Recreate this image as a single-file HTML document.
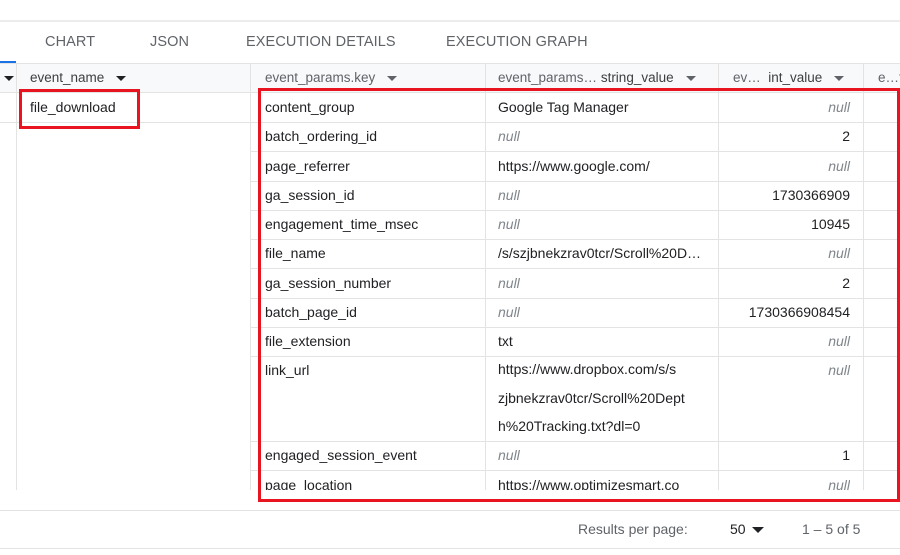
<!DOCTYPE html><html><head><style>
*{margin:0;padding:0;box-sizing:border-box}
body{width:900px;height:555px;background:#fff;font-family:"Liberation Sans",Arial,sans-serif;position:relative;overflow:hidden;font-size:14px;color:#202124}
.a{position:absolute;white-space:nowrap}
.h{background:#e3e3e3}
.v{background:#e3e3e3;width:1px}
.tab{top:34px;font-size:14.5px;color:#5f6368;letter-spacing:.1px}
.hd{top:70px;font-size:13.5px;color:#5f6368}
.hd b{color:#3c4043;font-weight:normal}
.t{display:inline-block;width:0;height:0;border-left:5px solid transparent;border-right:5px solid transparent;border-top:5px solid #5f6368;vertical-align:middle;margin-left:8px}
.null{color:#80868b;font-style:italic}
.red{position:absolute;border:3px solid #e8141f}
</style></head><body>
<div class="a h" style="left:0;top:20px;width:900px;height:2px;background:#ececec"></div>
<div class="a tab" style="left:45px">CHART</div>
<div class="a tab" style="left:150px">JSON</div>
<div class="a tab" style="left:246px">EXECUTION DETAILS</div>
<div class="a tab" style="left:446px">EXECUTION GRAPH</div>
<div class="a" style="left:0;top:61px;width:16px;height:2px;background:#1a73e8"></div>
<div class="a h" style="left:0;top:63px;width:900px;height:1px"></div>
<div class="a" style="left:0;top:64px;width:900px;height:28px;background:#f8f9fa"></div>
<div class="a h" style="left:0;top:92px;width:900px;height:1px"></div>
<div class="a hd" style="left:-4px"><span class="t" style="border-top-color:#202124"></span></div>
<div class="a hd" style="left:30px;color:#3c4043">event_name<span class="t" style="border-top-color:#202124;margin-left:12px"></span></div>
<div class="a hd" style="left:265px">event_params.key<span class="t" style="margin-left:12px"></span></div>
<div class="a hd" style="left:498px">event_params… <b>string_value</b><span class="t" style="margin-left:12px"></span></div>
<div class="a hd" style="left:733px">ev… &nbsp;<b>int_value</b><span class="t" style="margin-left:12px"></span></div>
<div class="a hd" style="left:878px">e…f</div>
<div class="a v" style="left:16px;top:64px;height:426px"></div>
<div class="a v" style="left:250px;top:64px;height:426px"></div>
<div class="a v" style="left:485px;top:64px;height:426px"></div>
<div class="a v" style="left:718px;top:64px;height:426px"></div>
<div class="a v" style="left:863px;top:64px;height:426px"></div>
<div class="a h" style="left:0;top:122px;width:250px;height:1px"></div>
<div class="a" style="left:30px;top:99px">file_download</div>
<div class="a h" style="left:250px;top:122px;width:650px;height:1px"></div>
<div class="a h" style="left:250px;top:151px;width:650px;height:1px"></div>
<div class="a h" style="left:250px;top:181px;width:650px;height:1px"></div>
<div class="a h" style="left:250px;top:210px;width:650px;height:1px"></div>
<div class="a h" style="left:250px;top:239px;width:650px;height:1px"></div>
<div class="a h" style="left:250px;top:268px;width:650px;height:1px"></div>
<div class="a h" style="left:250px;top:298px;width:650px;height:1px"></div>
<div class="a h" style="left:250px;top:327px;width:650px;height:1px"></div>
<div class="a h" style="left:250px;top:356px;width:650px;height:1px"></div>
<div class="a h" style="left:250px;top:441px;width:650px;height:1px"></div>
<div class="a h" style="left:250px;top:470px;width:650px;height:1px"></div>

<div class="a" style="left:265px;top:99px">content_group</div><div class="a" style="left:498px;top:99px">Google Tag Manager</div><div class="a null" style="left:720px;top:99px;width:130px;text-align:right">null</div>
<div class="a" style="left:265px;top:128px">batch_ordering_id</div><div class="a null" style="left:498px;top:128px">null</div><div class="a" style="left:720px;top:128px;width:130px;text-align:right">2</div>
<div class="a" style="left:265px;top:158px">page_referrer</div><div class="a" style="left:498px;top:158px">https://www.google.com/</div><div class="a null" style="left:720px;top:158px;width:130px;text-align:right">null</div>
<div class="a" style="left:265px;top:187px">ga_session_id</div><div class="a null" style="left:498px;top:187px">null</div><div class="a" style="left:720px;top:187px;width:130px;text-align:right">1730366909</div>
<div class="a" style="left:265px;top:216px">engagement_time_msec</div><div class="a null" style="left:498px;top:216px">null</div><div class="a" style="left:720px;top:216px;width:130px;text-align:right">10945</div>
<div class="a" style="left:265px;top:245px">file_name</div><div class="a" style="left:498px;top:245px">/s/szjbnekzrav0tcr/Scroll%20D…</div><div class="a null" style="left:720px;top:245px;width:130px;text-align:right">null</div>
<div class="a" style="left:265px;top:275px">ga_session_number</div><div class="a null" style="left:498px;top:275px">null</div><div class="a" style="left:720px;top:275px;width:130px;text-align:right">2</div>
<div class="a" style="left:265px;top:304px">batch_page_id</div><div class="a null" style="left:498px;top:304px">null</div><div class="a" style="left:720px;top:304px;width:130px;text-align:right">1730366908454</div>
<div class="a" style="left:265px;top:333px">file_extension</div><div class="a" style="left:498px;top:333px">txt</div><div class="a null" style="left:720px;top:333px;width:130px;text-align:right">null</div>
<div class="a" style="left:265px;top:362px">link_url</div><div class="a" style="left:498px;top:362px;line-height:28.5px;margin-top:-7px">https://www.dropbox.com/s/s<br>zjbnekzrav0tcr/Scroll%20Dept<br>h%20Tracking.txt?dl=0</div><div class="a null" style="left:720px;top:362px;width:130px;text-align:right">null</div>
<div class="a" style="left:265px;top:447px">engaged_session_event</div><div class="a null" style="left:498px;top:447px">null</div><div class="a" style="left:720px;top:447px;width:130px;text-align:right">1</div>
<div class="a" style="left:265px;top:477px;height:13px;overflow:hidden">page_location</div><div class="a" style="left:498px;top:477px;height:13px;overflow:hidden">https://www.optimizesmart.co</div><div class="a null" style="left:720px;top:477px;width:130px;text-align:right;height:13px;overflow:hidden">null</div>

<div class="a" style="left:0;top:490px;width:900px;height:65px;background:#fff"></div>
<div class="a h" style="left:0;top:510px;width:900px;height:1px"></div>
<div class="a h" style="left:0;top:548px;width:900px;height:1px"></div>
<div class="a" style="left:578px;top:521px;color:#5f6368">Results per page:</div>
<div class="a" style="left:730px;top:521px;color:#202124">50<span class="t" style="border-top-color:#202124;border-width:6px 6px 0 6px;margin-left:6px"></span></div>
<div class="a" style="left:802px;top:521px;color:#5f6368">1 – 5 of 5</div>
<div class="red" style="left:19px;top:89px;width:121px;height:40px"></div>
<div class="red" style="left:258px;top:88px;width:642px;height:414px"></div>
</body></html>
